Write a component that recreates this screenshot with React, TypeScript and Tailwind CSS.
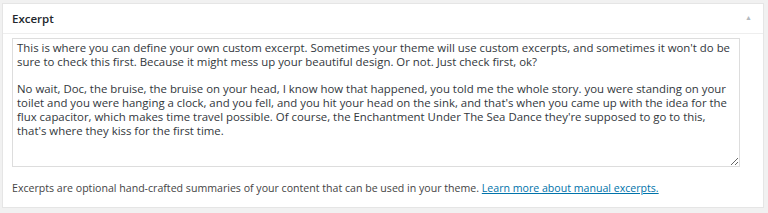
const EXCERPT = `This is where you can define your own custom excerpt. Sometimes your theme will use custom excerpts, and sometimes it won't do be sure to check this first. Because it might mess up your beautiful design. Or not. Just check first, ok?

No wait, Doc, the bruise, the bruise on your head, I know how that happened, you told me the whole story. you were standing on your toilet and you were hanging a clock, and you fell, and you hit your head on the sink, and that's when you came up with the idea for the flux capacitor, which makes time travel possible. Of course, the Enchantment Under The Sea Dance they're supposed to go to this, that's where they kiss for the first time.`;

export default function App() {
  return (
    <div
      className="h-[213px] w-[768px] bg-[#f1f1f1] pl-[2px] pt-[3px]"
      style={{ fontFamily: '"Open Sans", "Noto Sans", sans-serif' }}
    >
      <div className="h-[205px] w-[762px] border border-[#e5e5e5] bg-white">
        <div className="flex h-[30px] items-center justify-between border-b border-[#eee] pl-[9px] pr-[11px]">
          <span className="text-[11.5px] font-semibold text-[#23282d]">Excerpt</span>
          <span className="text-[7px] text-[#b4b9be]">▲</span>
        </div>
        <div className="px-[9px] pt-[4px]">
          <textarea
            defaultValue={EXCERPT}
            className="block h-[129px] w-[728px] resize-y border border-[#ddd] bg-white px-[4px] py-[2px] text-[11.4px] leading-[13.8px] text-[#32373c] outline-none"
            style={{ fontFamily: '"Open Sans", "Noto Sans", sans-serif' }}
          />
          <p className="mt-[14px] text-[10.6px] leading-[14px] text-[#444]">
            Excerpts are optional hand-crafted summaries of your content that can be used in your theme.{" "}
            <a href="#" className="text-[#0073aa] underline">
              Learn more about manual excerpts.
            </a>
          </p>
        </div>
      </div>
    </div>
  );
}
